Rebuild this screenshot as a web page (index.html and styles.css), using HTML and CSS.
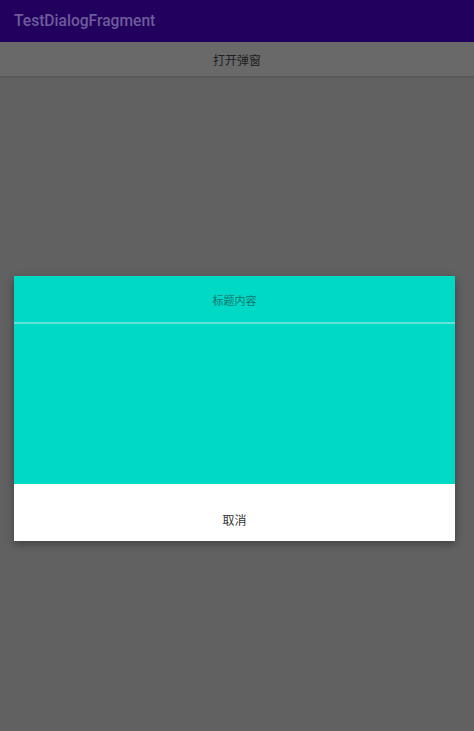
FILE: index.html
```html
<!DOCTYPE html>
<html>
<head>
<meta charset="utf-8">
<link rel="stylesheet" href="styles.css">
</head>
<body>
<div class="app">
  <div class="appbar"><span class="apptitle">TestDialogFragment</span></div>
  <div class="openbtn">打开弹窗</div>
  <div class="stage">
    <div class="dialog">
      <div class="dtitle">标题内容</div>
      <div class="divider"></div>
      <div class="dbody"></div>
      <div class="dfoot">取消</div>
    </div>
  </div>
</div>
</body>
</html>
```
FILE: styles.css
```css
html, body { margin: 0; padding: 0; }
body {
  width: 474px;
  height: 731px;
  overflow: hidden;
  background: #616161;
  font-family: Roboto, "Noto Sans CJK SC", sans-serif;
}
.app { display: flex; flex-direction: column; height: 731px; }
.appbar {
  height: 42px;
  background: #22005e;
  display: flex;
  align-items: center;
  padding-left: 14px;
  box-sizing: border-box;
}
.apptitle {
  color: #6e5c9a;
  font-size: 15.6px;
  font-weight: 500;
}
.openbtn {
  height: 34px;
  background: #696969;
  color: #1e1e1e;
  font-size: 12px;
  display: flex;
  align-items: center;
  justify-content: center;
  box-shadow: 0 1px 2px rgba(0,0,0,0.15);
}
.stage {
  flex: 1;
  padding-top: 200px;
  padding-left: 14px;
  padding-right: 19px;
}
.dialog {
  display: flex;
  flex-direction: column;
  box-shadow: 0 3px 8px rgba(0,0,0,0.35);
}
.dtitle {
  height: 46px;
  background: #00d9c6;
  color: #14776b;
  font-size: 11px;
  display: flex;
  align-items: center;
  justify-content: center;
  padding-top: 2px;
  box-sizing: border-box;
}
.divider { height: 2px; background: #62e3da; }
.dbody { height: 160px; background: #00d9c6; }
.dfoot {
  height: 57px;
  background: #ffffff;
  color: #333333;
  font-size: 12px;
  display: flex;
  align-items: flex-end;
  justify-content: center;
  padding-bottom: 13px;
  box-sizing: border-box;
}
```
